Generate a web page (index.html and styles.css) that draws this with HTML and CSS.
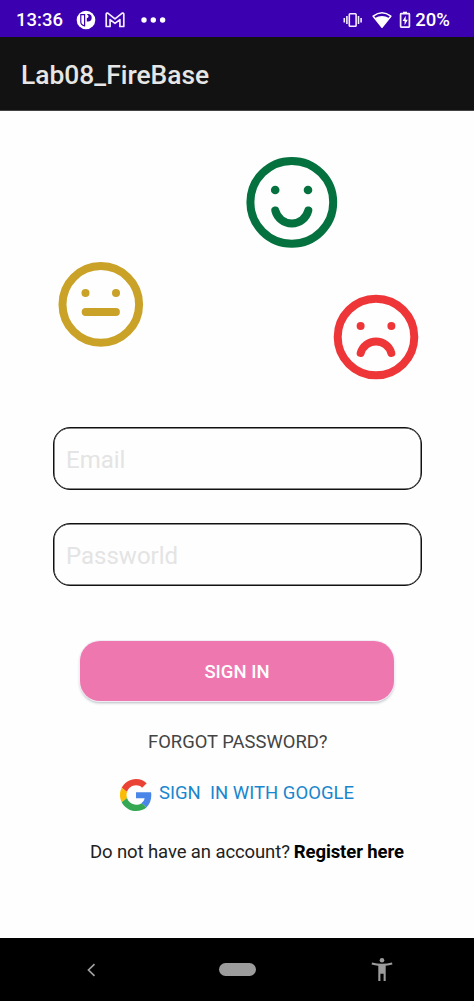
FILE: index.html
```html
<!DOCTYPE html>
<html lang="en">
<head>
<meta charset="utf-8">
<title>Lab08_FireBase</title>
<link rel="stylesheet" href="styles.css">
</head>
<body>
<div class="screen">
  <div class="status">
    <span class="clock">13:36</span>
    <svg class="app-dot" width="20" height="20" viewBox="0 0 20 20"><circle cx="10" cy="10" r="9.300" fill="#fff"/><path d="M4.800 4.600h3.800v11.200Q4.800 15 4.800 12z" fill="none" stroke="#3b00b0" stroke-width="1.200"/><path d="M10.800 4h1.200a3.700 3.700 0 0 1 0 7.400h-1.200V8.200a2.300 2.300 0 0 0 1.800-2.200z" fill="#3b00b0"/></svg>
    <svg class="mail" width="20" height="16" viewBox="0 0 20 16"><path d="M1.200 14.500V2.200Q1.200.9 2.800 1.200L10 6.800l7.200-5.600q1.600-.3 1.600 1v12.300h-3.900V7.600L10 11.400 5.100 7.600v6.900z" fill="none" stroke="#f4ecff" stroke-width="1.700" stroke-linejoin="round"/></svg>
    <svg class="more" width="26" height="6" viewBox="0 0 26 6" fill="#fff"><circle cx="3" cy="3" r="2.700"/><circle cx="12.300" cy="3" r="2.700"/><circle cx="21.600" cy="3" r="2.700"/></svg>
    <div class="status-right">
      <svg width="20" height="16" viewBox="0 0 20 16" fill="none" stroke="#f4ecff" stroke-width="1.600"><rect x="6.300" y="1.800" width="6.800" height="12.400" rx=".8"/><path d="M3.900 4v8M15.500 4v8M1.300 6v4.500M18.100 6v4.500"/></svg>
      <svg class="wifi" width="20" height="18" viewBox="0 0 20 18"><path d="M1.200 5.200Q10-1.800 18.800 5.200L10 16.300z" fill="none" stroke="#fff" stroke-width="1.500" stroke-linejoin="round"/><path d="M3 6.900Q10 3 17 6.900L10 16.500z" fill="#fff"/></svg>
      <svg class="battery" width="12" height="18" viewBox="0 0 12 18"><path d="M4 2.500V.7h4v1.800" fill="#fff"/><rect x="1.600" y="2.600" width="8.800" height="13.600" rx=".6" fill="none" stroke="#f4ecff" stroke-width="1.700"/><path d="M6.700 4.800 3.600 10h2v4.200L8.800 8.800H6.700z" fill="#fff"/></svg>
      <span class="percent">20%</span>
    </div>
  </div>
  <div class="appbar"><span class="title">Lab08_FireBase</span></div>
  <div class="content">
    <div class="faces">
      <svg class="face neutral" width="86" height="86" viewBox="0 0 86 86"><circle class="line" cx="42.800" cy="42.400" r="38.300"/><circle class="eye" cx="27.500" cy="31" r="4"/><circle class="eye" cx="58" cy="31" r="4"/><path class="line" d="M27.700 50h30.200"/></svg>
      <svg class="face happy" width="92" height="92" viewBox="0 0 92 92"><circle class="line" cx="45.800" cy="46.300" r="41.400"/><circle class="eye" cx="29.200" cy="34" r="4.300"/><circle class="eye" cx="62" cy="34" r="4.300"/><path class="line" d="M29.300 54.500A17 17 0 0 0 62.300 54.500"/></svg>
      <svg class="face sad" width="86" height="86" viewBox="0 0 86 86"><circle class="line" cx="43" cy="43" r="38.300"/><circle class="eye" cx="27.600" cy="32" r="4"/><circle class="eye" cx="58.400" cy="32" r="4"/><path class="line" d="M27.700 59A15.900 15.900 0 0 1 58.300 59"/></svg>
    </div>
    <input class="field" type="text" placeholder="Email">
    <input class="field" type="text" placeholder="Passworld">
    <button class="signin"><span>SIGN IN</span></button>
    <div class="forgot"><span>FORGOT PASSWORD?</span></div>
    <div class="google">
      <svg width="32" height="32" viewBox="0 0 48 48"><path fill="#4a86e8" d="M46.980 24.550c0-1.570-.15-3.090-.38-4.550H24v9.020h12.940c-.58 2.960-2.260 5.480-4.780 7.180l7.730 6c4.510-4.180 7.090-10.360 7.090-17.650z"/><path fill="#ea4335" d="M24 9.500c3.540 0 6.710 1.220 9.210 3.600l6.850-6.850C35.900 2.380 30.470 0 24 0 14.620 0 6.510 5.380 2.560 13.220l7.980 6.190C12.430 13.720 17.740 9.500 24 9.500z"/><path fill="#fbbc05" d="M10.530 28.590c-.48-1.450-.76-2.990-.76-4.590s.27-3.140.76-4.590l-7.980-6.190C.92 16.460 0 20.120 0 24s.92 7.540 2.560 10.780l7.970-6.190z"/><path fill="#34a853" d="M24 48c6.480 0 11.930-2.130 15.890-5.810l-7.730-6c-2.150 1.450-4.920 2.300-8.160 2.300-6.260 0-11.570-4.220-13.470-9.910l-7.980 6.190C6.510 42.620 14.620 48 24 48z"/></svg>
      <span>SIGN&nbsp; IN WITH GOOGLE</span>
    </div>
    <div class="register"><span>Do not have an account?</span><b>Register here</b></div>
  </div>
  <div class="navbar">
    <svg width="12" height="16" viewBox="0 0 12 16"><path d="M9.500 2.200 3.500 8l6 5.800" fill="none" stroke="#a0a0a0" stroke-width="1.700"/></svg>
    <div class="home"></div>
    <svg class="access" width="22" height="26" viewBox="0 0 22 26" fill="#9c9c9c"><circle cx="11" cy="3.200" r="2.300"/><path d="M1 5.600Q11 8.100 21 5.600l.4 1.900q-3.500.9-6.700 1.200V24h-2.100v-7.200H9.400V24H7.300V8.700Q4 8.400.6 7.500z"/></svg>
  </div>
</div>
</body>
</html>
```
FILE: styles.css
```css
* { box-sizing: border-box; }
body { margin: 0; font-family: Roboto, "Liberation Sans", sans-serif; background: #fefefe; }
svg { display: block; flex: none; }
span, b { white-space: pre; }
.screen { width: 474px; height: 1001px; display: flex; flex-direction: column; }
.status { height: 37px; background: #3b00b0; color: #fff; display: flex; align-items: center; padding: 2px 24px 0 16px; font-size: 18.500px; font-weight: 500; }
.app-dot { margin-left: 13px; }
.mail { margin-left: 9px; }
.more { margin-left: 16px; }
.status-right { margin-left: auto; display: flex; align-items: center; }
.wifi { margin-left: 9px; }
.battery { margin: 0 4px 0 7px; }
.appbar { height: 74px; background: #121212; border-bottom: 1px solid #444; padding: 2px 0 0 21px; display: flex; align-items: center; color: #e6e6e6; font-size: 26.400px; font-weight: 500; }
.content { height: 827px; display: flex; flex-direction: column; }
.faces { display: flex; align-items: flex-start; padding-left: 58px; height: 316px; }
.line { fill: none; stroke: currentColor; stroke-width: 8px; stroke-linecap: round; }
.eye { fill: currentColor; }
.neutral { color: #c9a227; margin-top: 151px; }
.happy { color: #04713f; margin: 45px 0 0 102px; }
.sad { color: #ee3537; margin: 183px 0 0 -5px; }
.field { width: 369px; height: 63px; margin: 0 0 33px 53px; padding: 2px 12px 0; border: 1px solid #111; box-shadow: inset 0 0 0 .5px #111; border-radius: 17px; background: #fefefe; font-family: inherit; font-size: 24px; }
.field::placeholder { color: #e4e4e4; opacity: 1; }
.signin { width: 314px; height: 60px; margin: 22px 0 0 80px; border: 0; border-radius: 20px; background: #ee77af; box-shadow: 0 0 0 1px #f1edf4, 0 2px 3px 0 #b5bcc2; color: #fff; font: 500 18.500px Roboto, sans-serif; padding: 2px 0 0; }
.forgot { margin: 29px 0 0 148px; height: 24px; line-height: 24px; font-size: 18.400px; color: #444; }
.google { display: flex; align-items: center; height: 32px; margin: 25px 0 0 120px; gap: 7px; font-size: 18.500px; color: #1986cd; }
.google span { margin-top: -4px; }
.register { display: flex; gap: 4px; margin: 29px 0 0 90px; height: 24px; line-height: 24px; font-size: 18.500px; letter-spacing: -.1px; color: #222; }
.register b { color: #000; }
.navbar { height: 63px; background: #000; display: flex; align-items: center; padding: 0 81px 0 85px; }
.home { width: 37px; height: 13px; border-radius: 7px; background: #9c9c9c; margin: 0 auto 0 122px; }
```
